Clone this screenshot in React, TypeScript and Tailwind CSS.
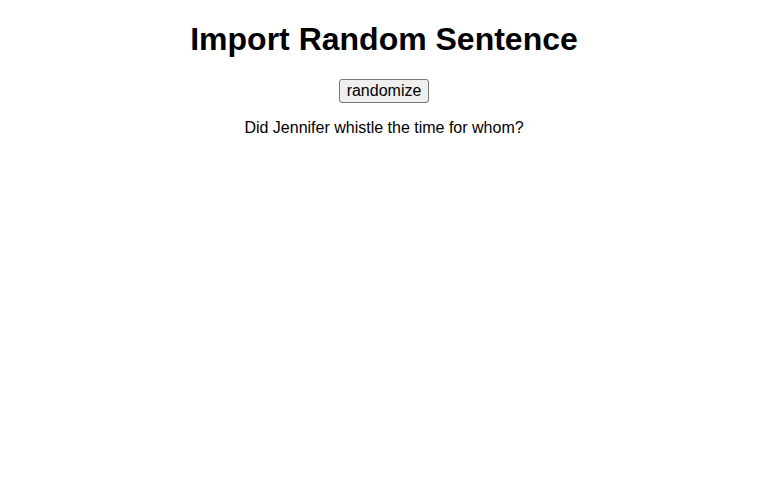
import React from 'react';

const sentences = [
  'Did Jennifer whistle the time for whom?',
  'Will the teacher paint a river over there?',
  'Does Marcus borrow the lamp before noon?',
  'Could the dog forget a song for whom?',
];

const App: React.FC = () => {
  const [sentence, setSentence] = React.useState(sentences[0]);

  const randomize = () => {
    const next = sentences[Math.floor(Math.random() * sentences.length)];
    setSentence(next);
  };

  return (
    <div className="min-h-screen bg-white text-center text-black font-['Liberation_Sans',Arial,sans-serif] pt-[21px]">
      <h1 className="text-[32px] font-bold leading-[37px] mb-[21px]">Import Random Sentence</h1>
      <button
        onClick={randomize}
        className="bg-[#efefef] border border-[#767676] rounded-[3px] px-[7px] h-[24px] text-base leading-[18px] text-black"
      >
        randomize
      </button>
      <p className="text-base leading-[18px] mt-[16px]">{sentence}</p>
    </div>
  );
};

export default App;
